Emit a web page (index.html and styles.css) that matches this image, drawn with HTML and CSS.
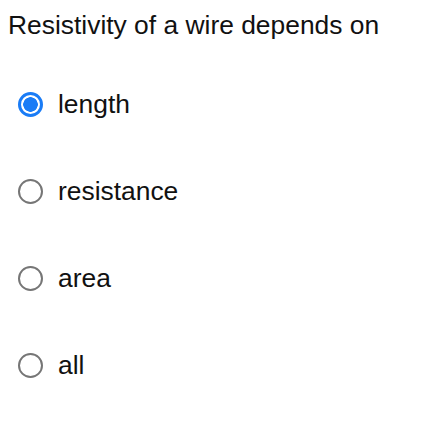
FILE: index.html
```html
<!DOCTYPE html>
<html>
<head>
<meta charset="utf-8">
<link rel="stylesheet" href="styles.css">
</head>
<body>
<div class="question">Resistivity of a wire depends on</div>
<div class="options">
  <label class="option"><input type="radio" name="q" class="radio" checked><span>length</span></label>
  <label class="option"><input type="radio" name="q" class="radio"><span>resistance</span></label>
  <label class="option"><input type="radio" name="q" class="radio"><span>area</span></label>
  <label class="option"><input type="radio" name="q" class="radio"><span>all</span></label>
</div>
</body>
</html>
```
FILE: styles.css
```css
body {
  margin: 8px;
  font-family: "Liberation Sans", Arial, sans-serif;
  font-size: 26.4px;
  color: #111;
  background: #fff;
}
.question {
  line-height: 30px;
  margin-top: 2px;
}
.options {
  display: flex;
  flex-direction: column;
  gap: 60px;
  margin-top: 51px;
  padding-left: 10px;
}
.option {
  display: flex;
  align-items: center;
  gap: 15px;
  height: 27px;
}
.radio {
  appearance: none;
  -webkit-appearance: none;
  margin: 0;
  width: 25px;
  height: 25px;
  border: 2px solid #767676;
  border-radius: 50%;
  box-sizing: border-box;
  background: #fff;
}
.radio:checked {
  border: 3px solid #1a7cf6;
  background: radial-gradient(circle, #1a7cf6 0 7px, #fff 7.5px);
}
```
